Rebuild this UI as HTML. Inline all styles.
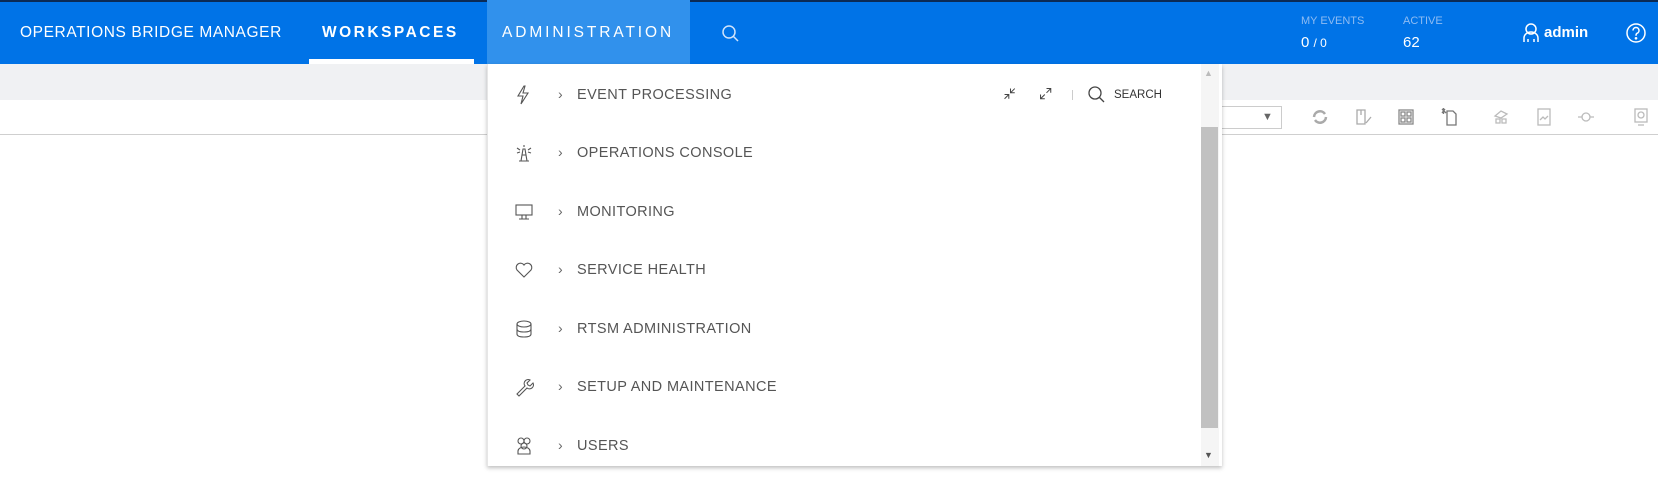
<!DOCTYPE html>
<html><head><meta charset="utf-8"><style>
*{margin:0;padding:0;box-sizing:border-box}
body{width:1658px;height:489px;overflow:hidden;background:#fff;font-family:"Liberation Sans",sans-serif;position:relative}
.nav{position:absolute;left:0;top:0;width:1658px;height:64px;background:#0073e7;border-top:2px solid #0b2a55}
.a{position:absolute;white-space:nowrap}
.nt{color:#fff;font-size:15.5px;top:22px}
.gray{position:absolute;left:0;top:64px;width:1658px;height:36px;background:#f0f1f3}
.tb{position:absolute;left:0;top:134px;width:1658px;height:1px;background:#cfcfcf}
.panel{position:absolute;left:487px;top:64px;width:735px;height:402px;background:#fff;box-shadow:0 2px 4px rgba(0,0,0,.25);border-left:1px solid #e6e6e6}
.it{position:absolute;left:0;height:20px;width:700px;color:#555;font-size:14.5px;letter-spacing:.4px}
.it svg{position:absolute;left:26px;top:0}
.it .ch{position:absolute;left:70px;top:1px;font-size:14px;color:#666}
.it .tx{position:absolute;left:89px;top:2px}
.ic{position:absolute;top:108px}
</style></head><body>
<div class="nav">
<div class="a nt" style="left:20px;letter-spacing:.6px">OPERATIONS BRIDGE MANAGER</div>
<div class="a nt" style="left:322px;font-weight:bold;letter-spacing:2.5px">WORKSPACES</div>
<div class="a" style="left:309px;top:57px;width:165px;height:5px;background:#fff"></div>
<div class="a" style="left:487px;top:-2px;width:203px;height:64px;background:#3191ec"></div>
<div class="a nt" style="left:502px;letter-spacing:2.9px">ADMINISTRATION</div>
<svg class="a" style="left:721px;top:22px" width="20" height="20" viewBox="0 0 20 20" fill="none" stroke="#cfe3fb" stroke-width="1.5"><circle cx="8" cy="8" r="6"/><path d="M12.5 12.5L17 17"/></svg>
<div class="a" style="left:1301px;top:13px;color:#8fbcf2;font-size:11px">MY EVENTS</div>
<div class="a" style="left:1301px;top:32px;color:#fff;font-size:15px">0 <span style="font-size:12px">/ 0</span></div>
<div class="a" style="left:1403px;top:13px;color:#8fbcf2;font-size:11px">ACTIVE</div>
<div class="a" style="left:1403px;top:32px;color:#fff;font-size:15px">62</div>
<svg class="a" style="left:1521px;top:20px" width="20" height="22" viewBox="0 0 20 22" fill="none" stroke="#fff" stroke-width="1.5"><circle cx="10" cy="7" r="5"/><path d="M3 20v-4a7 6 0 0 1 14 0v4M7 20v-3M13 20v-3"/></svg>
<div class="a" style="left:1544px;top:22px;color:#fff;font-size:15px;font-weight:bold">admin</div>
<svg class="a" style="left:1625px;top:20px" width="22" height="22" viewBox="0 0 22 22" fill="none" stroke="#fff" stroke-width="1.5"><circle cx="11" cy="11" r="9"/><path d="M8 8.5a3 3 0 1 1 4 2.8c-1 .5-1 1.2-1 2.4"/><circle cx="11" cy="16.3" r=".6" fill="#fff"/></svg>
</div>
<div class="gray"></div>
<div class="tb"></div>
<div class="a" style="left:1150px;top:106px;width:132px;height:23px;border:1px solid #ccc;background:#fff"></div>
<div class="a" style="left:1262px;top:111px;color:#666;font-size:11px">▼</div>
<svg class="ic" style="left:1311px" width="18" height="18" viewBox="0 0 18 18" fill="none" stroke="#aaa" stroke-width="2.5"><path d="M3 9a6 6 0 0 1 11-3M15 9a6 6 0 0 1-11 3"/></svg>
<svg class="ic" style="left:1355px" width="18" height="18" viewBox="0 0 18 18" fill="none" stroke="#aaa" stroke-width="1.3"><path d="M2 2h8v14H2zM6 2v5M11 15l5-6"/></svg>
<svg class="ic" style="left:1397px" width="18" height="18" viewBox="0 0 18 18" fill="none" stroke="#888" stroke-width="1.3"><rect x="2" y="2" width="14" height="14"/><rect x="4" y="4" width="4" height="4"/><rect x="10" y="4" width="4" height="4"/><rect x="4" y="10" width="4" height="4"/><rect x="10" y="10" width="4" height="4"/></svg>
<svg class="ic" style="left:1440px" width="18" height="18" viewBox="0 0 18 18" fill="none" stroke="#777" stroke-width="1.3"><path d="M7 3h6l3 3v11H7zM2 1l4 4M5 1L2 5M3.5 0v6"/></svg>
<svg class="ic" style="left:1492px" width="18" height="18" viewBox="0 0 18 18" fill="none" stroke="#bbb" stroke-width="1.3"><path d="M3 8l6-5 6 3-6 4zM4 11h4v4H4zM10 11h4v4h-4z"/></svg>
<svg class="ic" style="left:1535px" width="18" height="18" viewBox="0 0 18 18" fill="none" stroke="#bbb" stroke-width="1.3"><rect x="3" y="1" width="12" height="16"/><path d="M5 12l3-3 2 2 3-3"/></svg>
<svg class="ic" style="left:1577px" width="18" height="18" viewBox="0 0 18 18" fill="none" stroke="#bbb" stroke-width="1.3"><circle cx="9" cy="9" r="4"/><path d="M1 9h4M13 9h4"/></svg>
<svg class="ic" style="left:1632px" width="18" height="18" viewBox="0 0 18 18" fill="none" stroke="#bbb" stroke-width="1.3"><rect x="3" y="1" width="12" height="13"/><circle cx="9" cy="7" r="3"/><path d="M6 17h6"/></svg>
<div class="panel">
<div class="a" style="left:713px;top:0;width:18px;height:402px;background:#f5f5f5"></div>
<div class="a" style="left:713px;top:63px;width:17px;height:301px;background:#c1c1c1"></div>
<div class="a" style="left:716px;top:4px;color:#bbb;font-size:9px">▲</div>
<div class="a" style="left:716px;top:386px;color:#555;font-size:9px">▼</div>
<svg class="a" style="left:514px;top:22px" width="16" height="16" viewBox="0 0 16 16" fill="none" stroke="#444" stroke-width="1.2"><path d="M2 14l5-5M2 9h5v5M14 2l-5 5M9 2v5h5" transform="scale(.85) translate(1 1)"/></svg>
<svg class="a" style="left:550px;top:22px" width="16" height="16" viewBox="0 0 16 16" fill="none" stroke="#444" stroke-width="1.2"><path d="M2 14l5-5M2 9v5h5M14 2l-5 5M9 2h5v5" transform="scale(.85) translate(1 1)"/></svg>
<div class="a" style="left:584px;top:26px;width:1px;height:10px;background:#ccc"></div>
<svg class="a" style="left:599px;top:21px" width="20" height="20" viewBox="0 0 20 20" fill="none" stroke="#444" stroke-width="1.3"><circle cx="8" cy="8" r="6"/><path d="M12.5 12.5L17 17"/></svg>
<div class="a" style="left:626px;top:25px;font-size:11.5px;color:#333">SEARCH</div>
<div class="it" style="top:21px"><svg width="18" height="20" viewBox="0 0 18 20" fill="none" stroke="#555" stroke-width="1.1"><path d="M10 1L4 11h5l-2 8 7-11H9l2-7z"/></svg><span class="ch">›</span><span class="tx">EVENT PROCESSING</span></div>
<div class="it" style="top:79px"><svg width="20" height="20" viewBox="0 0 20 20" fill="none" stroke="#555" stroke-width="1.1"><path d="M7 18l2-12h2l2 12M5 18h10M8 12h4M3 5l3 2M17 5l-3 2M3 10l3-1M17 10l-3-1M10 2v2"/></svg><span class="ch">›</span><span class="tx">OPERATIONS CONSOLE</span></div>
<div class="it" style="top:138px"><svg width="20" height="20" viewBox="0 0 20 20" fill="none" stroke="#555" stroke-width="1.1"><rect x="2" y="3" width="16" height="10"/><path d="M8 13v4M12 13v4M5 17h10"/></svg><span class="ch">›</span><span class="tx">MONITORING</span></div>
<div class="it" style="top:196px"><svg width="20" height="20" viewBox="0 0 20 20" fill="none" stroke="#555" stroke-width="1.1"><path d="M10 17L3 10a4 4 0 0 1 7-5 4 4 0 0 1 7 5z"/></svg><span class="ch">›</span><span class="tx">SERVICE HEALTH</span></div>
<div class="it" style="top:255px"><svg width="20" height="20" viewBox="0 0 20 20" fill="none" stroke="#555" stroke-width="1.1"><ellipse cx="10" cy="5" rx="7" ry="3"/><path d="M3 5v10c0 2 3 3 7 3s7-1 7-3V5M3 10c0 2 3 3 7 3s7-1 7-3"/></svg><span class="ch">›</span><span class="tx">RTSM ADMINISTRATION</span></div>
<div class="it" style="top:313px"><svg width="20" height="20" viewBox="0 0 20 20" fill="none" stroke="#555" stroke-width="1.1"><path d="M3 17l8-8a4 4 0 0 1 5-6l-3 3 1 2 2 1 3-3a4 4 0 0 1-6 5l-8 8z"/></svg><span class="ch">›</span><span class="tx">SETUP AND MAINTENANCE</span></div>
<div class="it" style="top:372px"><svg width="20" height="20" viewBox="0 0 20 20" fill="none" stroke="#555" stroke-width="1.1"><circle cx="7" cy="5" r="3"/><circle cx="13" cy="5" r="3"/><circle cx="10" cy="10" r="3"/><path d="M4 18v-3a6 4 0 0 1 12 0v3z"/></svg><span class="ch">›</span><span class="tx">USERS</span></div>
</div>
</body></html>
